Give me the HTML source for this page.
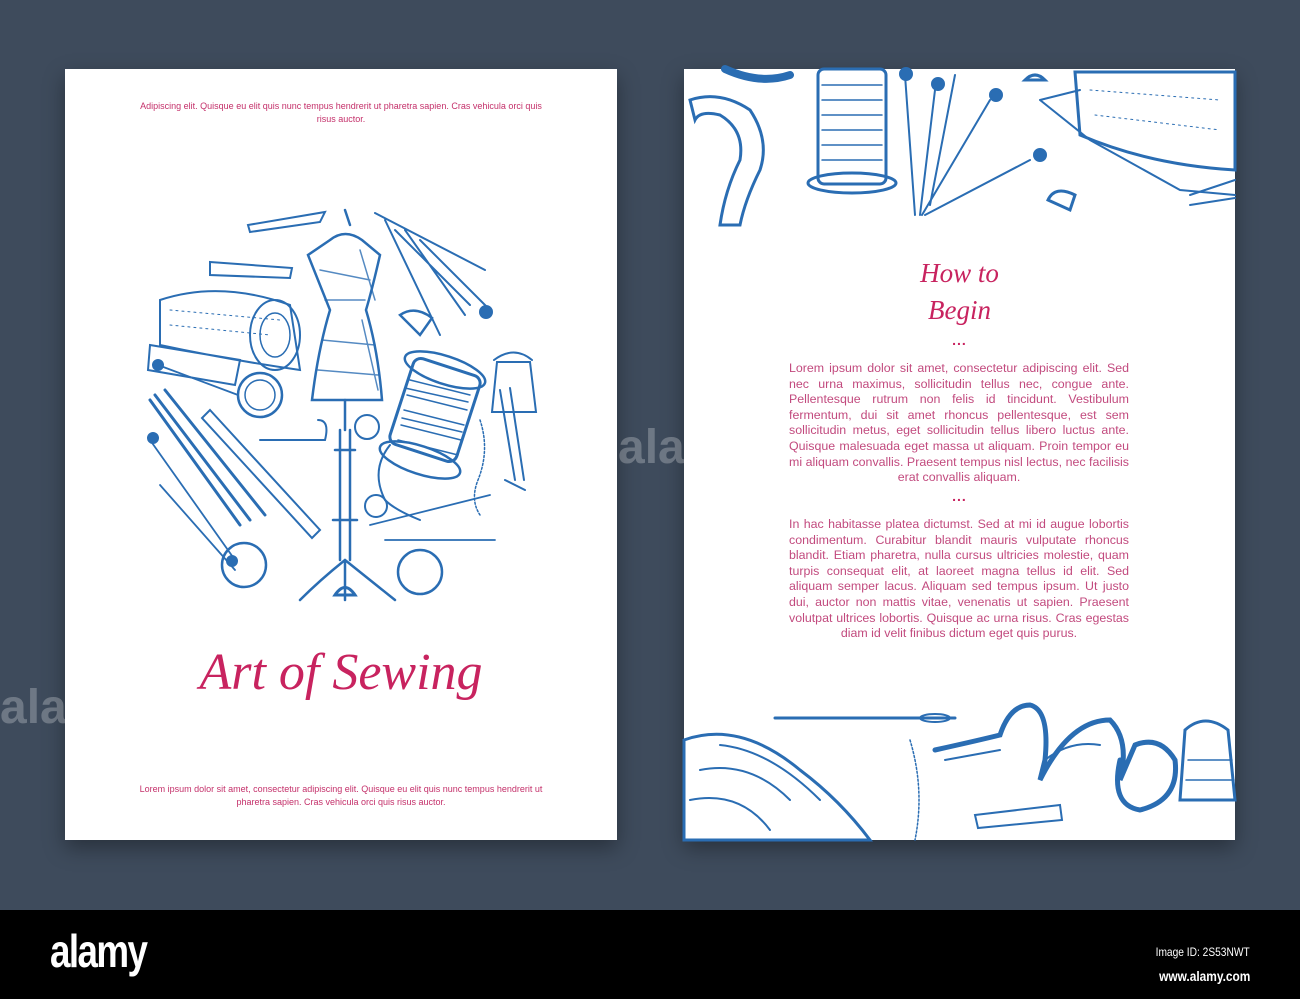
<!DOCTYPE html>
<html><head><meta charset="utf-8"><style>
html,body{margin:0;padding:0}
body{width:1300px;height:999px;background:#3e4b5c;position:relative;overflow:hidden;font-family:"Liberation Sans",sans-serif}
.card{position:absolute;background:#fff;top:69px;height:771px;box-shadow:0 8px 20px rgba(0,0,0,.35)}
#l{left:65px;width:552px}
#r{left:684px;width:551px}
.small{position:absolute;color:#c4306a;font-size:9px;line-height:13px;text-align:center}
.title{position:absolute;color:#c8235f;font-family:"Liberation Serif",serif;font-style:italic;text-align:center}
.body{position:absolute;left:105px;width:340px;color:#c24a7e;font-size:12.4px;line-height:15.6px;text-align:justify;text-align-last:center}
.dots{position:absolute;left:0;width:551px;text-align:center;color:#c8235f;font-size:14px;font-weight:bold;letter-spacing:1px}
#foot{position:absolute;left:0;top:910px;width:1300px;height:89px;background:#000}
svg{position:absolute;left:0;top:0}
</style></head><body>
<div class="card" id="l">
<div class="small" style="left:70px;width:412px;top:31px">Adipiscing elit. Quisque eu elit quis nunc tempus hendrerit ut pharetra sapien. Cras vehicula orci quis risus auctor.</div>
<div class="title" style="left:0;width:552px;top:574px;font-size:52px">Art of Sewing</div>
<div class="small" style="left:70px;width:412px;top:714px">Lorem ipsum dolor sit amet, consectetur adipiscing elit. Quisque eu elit quis nunc tempus hendrerit ut pharetra sapien. Cras vehicula orci quis risus auctor.</div>
</div>
<div class="card" id="r">
<div class="title" style="left:0;width:551px;top:186px;font-size:27px;line-height:37px">How to<br>Begin</div>
<div class="dots" style="top:263px">...</div>
<div class="body" style="top:292px">Lorem ipsum dolor sit amet, consectetur adipiscing elit. Sed nec urna maximus, sollicitudin tellus nec, congue ante. Pellentesque rutrum non felis id tincidunt. Vestibulum fermentum, dui sit amet rhoncus pellentesque, est sem sollicitudin metus, eget sollicitudin tellus libero luctus ante. Quisque malesuada eget massa ut aliquam. Proin tempor eu mi aliquam convallis. Praesent tempus nisl lectus, nec facilisis erat convallis aliquam.</div>
<div class="dots" style="top:419px">...</div>
<div class="body" style="top:448px">In hac habitasse platea dictumst. Sed at mi id augue lobortis condimentum. Curabitur blandit mauris vulputate rhoncus blandit. Etiam pharetra, nulla cursus ultricies molestie, quam turpis consequat elit, at laoreet magna tellus id elit. Sed aliquam semper lacus. Aliquam sed tempus ipsum. Ut justo dui, auctor non mattis vitae, venenatis ut sapien. Praesent volutpat ultrices lobortis. Quisque ac urna risus. Cras egestas diam id velit finibus dictum eget quis purus.</div>
</div>
<svg width="1300" height="910" viewBox="0 0 1300 910" fill="none" stroke="#2a6db3" stroke-width="2" stroke-linecap="round">
<path d="M345 210 L350 225 M330 240 Q345 228 362 240 L380 255 Q372 290 366 310 Q378 350 382 400 L312 400 Q318 350 330 310 Q322 290 308 255 Z" stroke-width="2.5"/>
<path d="M320 270 L370 280 M325 300 L365 300 M322 340 L375 345 M318 370 L378 375 M360 250 L375 300 M362 320 L378 390" stroke-width="1.5" opacity=".8"/>
<path d="M345 400 L345 430 M340 430 L340 560 M350 430 L350 560 M335 450 L355 450 M333 520 L357 520 M345 560 Q320 580 300 600 M345 560 Q370 580 395 600 M345 560 L345 600" stroke-width="2.5"/>
<rect x="400" y="365" width="70" height="90" rx="8" transform="rotate(18 435 410)" stroke-width="3"/>
<path d="M410 380 L470 395 M407 395 L467 410 M404 410 L464 425 M401 425 L461 440 M398 440 L458 455 M405 388 L468 402 M402 418 L462 432" stroke-width="1.5"/>
<ellipse cx="445" cy="370" rx="42" ry="14" transform="rotate(18 445 370)" stroke-width="2.5"/>
<ellipse cx="420" cy="460" rx="42" ry="14" transform="rotate(18 420 460)" stroke-width="2.5"/>
<path d="M390 445 Q370 470 385 500 Q395 510 420 520"/>
<path d="M160 300 Q220 280 290 305 L300 370 Q230 360 160 345 Z M150 345 L240 360 L235 385 L148 370 Z" stroke-width="2"/>
<ellipse cx="275" cy="335" rx="25" ry="35" stroke-width="2"/>
<ellipse cx="275" cy="335" rx="15" ry="22" stroke-width="1.5"/>
<path d="M170 310 L280 320 M170 325 L270 335" stroke-width="1" stroke-dasharray="2 4"/>
<path d="M248 225 L325 212 L320 222 L250 232 Z M210 262 L292 268 L290 278 L210 275 Z" stroke-width="2"/>
<path d="M375 213 L485 270 M385 220 L440 335 M395 230 L470 305 M420 240 L490 310 M405 230 L465 315" stroke-width="2"/>
<circle cx="486" cy="312" r="6" fill="#2a6db3"/>
<path d="M400 315 Q415 305 432 318 L420 335 Z" stroke-width="2.5"/>
<path d="M497 362 L530 362 L536 412 L492 412 Z M494 360 Q514 345 532 360" stroke-width="2"/>
<path d="M500 390 L515 480 M510 388 L524 480 M505 480 L525 490" stroke-width="2"/>
<path d="M480 420 Q490 450 478 480 Q470 500 480 515" stroke-width="1.5" stroke-dasharray="2 2"/>
<circle cx="260" cy="395" r="22" stroke-width="2.5"/><circle cx="260" cy="395" r="15" stroke-width="1.5"/>
<circle cx="244" cy="565" r="22" stroke-width="2.5"/><circle cx="420" cy="572" r="22" stroke-width="2.5"/>
<circle cx="376" cy="506" r="11" stroke-width="2"/><circle cx="367" cy="427" r="12" stroke-width="2"/>
<path d="M155 395 L250 520 M165 390 L265 515 M150 400 L240 525" stroke-width="3"/>
<path d="M210 410 L320 530 L312 538 L202 418 Z M260 440 L325 440 Q330 420 318 420" stroke-width="2"/>
<path d="M150 440 L235 560 M160 485 L235 570 M158 365 L238 395" stroke-width="1.8"/>
<circle cx="153" cy="438" r="5" fill="#2a6db3"/><circle cx="158" cy="365" r="5" fill="#2a6db3"/><circle cx="232" cy="561" r="5" fill="#2a6db3"/>
<path d="M370 525 L490 495 M385 540 L495 540" stroke-width="1.8"/>
<path d="M335 595 Q345 580 355 595 Z" stroke-width="3"/>
<path d="M690 100 Q720 90 750 110 Q770 140 760 170 Q745 200 740 225 L720 225 Q725 190 740 160 Q745 130 720 115 Q700 110 695 120 Z" stroke-width="3"/>
<path d="M725 69 Q760 85 790 75" stroke-width="8"/>
<rect x="818" y="69" width="68" height="115" rx="6" stroke-width="3"/>
<path d="M822 85 L882 85 M822 100 L882 100 M822 115 L882 115 M822 130 L882 130 M822 145 L882 145 M822 160 L882 160" stroke-width="1.5"/>
<ellipse cx="852" cy="183" rx="44" ry="10" stroke-width="3"/>
<path d="M905 75 L915 215 M935 90 L920 215 M990 100 L922 215 M1030 160 L925 215 M955 75 L930 205" stroke-width="2"/>
<circle cx="1040" cy="155" r="6" fill="#2a6db3"/><circle cx="996" cy="95" r="6" fill="#2a6db3"/><circle cx="938" cy="84" r="6" fill="#2a6db3"/><circle cx="906" cy="74" r="6" fill="#2a6db3"/>
<path d="M1075 72 L1235 72 L1235 170 Q1150 165 1080 135 Z" stroke-width="3"/>
<path d="M1040 100 L1090 140 L1180 190 L1235 195 M1040 100 L1080 90" stroke-width="2"/>
<path d="M1090 90 L1220 100 M1095 115 L1220 130" stroke-width="1" stroke-dasharray="2 4"/>
<path d="M1048 200 Q1055 185 1075 195 L1070 210 Z M1025 80 Q1035 70 1045 80 Z" stroke-width="3"/>
<path d="M1190 195 L1235 180 M1190 205 L1235 198" stroke-width="2"/>
<path d="M775 718 L955 718" stroke-width="3"/>
<ellipse cx="935" cy="718" rx="15" ry="4" stroke-width="2"/>
<path d="M684 740 Q740 720 800 770 Q840 800 870 840 L684 840 Z" stroke-width="3"/>
<path d="M700 770 Q750 760 790 800 M690 800 Q740 790 770 830 M720 745 Q770 750 820 800" stroke-width="2"/>
<path d="M910 740 Q925 790 915 840" stroke-width="1.5" stroke-dasharray="2 2"/>
<path d="M935 750 Q980 740 1000 735 Q1010 705 1030 705 Q1050 710 1045 760 L1040 780 Q1070 720 1110 720 Q1130 740 1120 780 L1135 745 Q1160 735 1175 760 Q1180 800 1140 810 Q1110 805 1120 760" stroke-width="5"/>
<path d="M945 760 L1000 750 M1045 760 Q1070 740 1100 745" stroke-width="2"/>
<path d="M1185 730 Q1205 712 1228 730 L1235 800 L1180 800 Z" stroke-width="3"/>
<path d="M1188 760 L1232 760 M1186 780 L1234 780" stroke-width="1.5"/>
<path d="M975 815 L1060 805 L1062 820 L978 828 Z" stroke-width="2"/>
</svg>
<div style="position:absolute;left:0;top:680px;font-size:48px;font-weight:bold;color:rgba(255,255,255,.25)">alamy</div>
<div style="position:absolute;left:618px;top:420px;font-size:48px;font-weight:bold;color:rgba(255,255,255,.25)">alamy</div>
<div id="foot">
<div style="position:absolute;left:50px;top:14px;color:#fff;font-size:46px;font-weight:bold;letter-spacing:-2px;transform:scaleX(.8);transform-origin:left">alamy</div>
<div style="position:absolute;right:50px;top:35px;color:#fff;font-size:12px;transform:scaleX(.85);transform-origin:right">Image ID: 2S53NWT</div>
<div style="position:absolute;right:50px;top:58px;color:#fff;font-size:14px;font-weight:bold;transform:scaleX(.85);transform-origin:right">www.alamy.com</div>
</div>
</body></html>
